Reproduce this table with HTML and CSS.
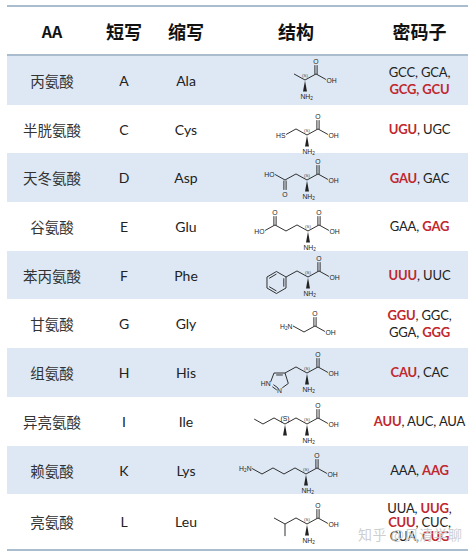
FILE: index.html
```html
<!DOCTYPE html>
<html lang="zh">
<head>
<meta charset="utf-8">
<title>氨基酸</title>
<link rel="stylesheet" href="styles.css">
</head>
<body>
<svg class="defs" width="0" height="0" aria-hidden="true">
  <defs>
    <g id="acid">
      <path d="M0 0L10 -5.5L19 -0.5M9 -5L9 -13.5M11 -5L11 -13.5" fill="none" stroke="#222" stroke-width="0.85"/>
      <text x="10" y="-14.5" text-anchor="middle" fill="#222" font-size="6.2" font-family="Liberation Sans, sans-serif">O</text>
      <text x="19.5" y="2.5" fill="#222" font-size="6.2" font-family="Liberation Sans, sans-serif">OH</text>
    </g>
    <g id="amine">
      <polygon points="0,0.5 -1.8,10.5 1.8,10.5" fill="#222"/>
      <text x="1.5" y="17.5" text-anchor="middle" fill="#222" font-size="6.2" font-family="Liberation Sans, sans-serif">NH<tspan font-size="4.3" dy="1">2</tspan></text>
      <text x="0" y="-3" text-anchor="middle" fill="#444" font-size="4" font-family="Liberation Sans, sans-serif">(S)</text>
    </g>
  </defs>
</svg>

<div class="table">
  <div class="row head">
    <div class="c lat">AA</div><div class="c">短写</div><div class="c">缩写</div><div class="c">结构</div><div class="c">密码子</div>
  </div>

  <div class="row alt">
    <div class="c cn">丙氨酸</div><div class="c ab">A</div><div class="c ab">Ala</div>
    <div class="c st"><svg class="mol" viewBox="0 0 150 49"><g transform="translate(84 24) scale(1.1)"><use href="#acid"/><use href="#amine"/><path d="M0 0L-10 -5.5"/></g></svg></div>
    <div class="c codon">GCC, GCA,<br><b>GCG, GCU</b></div>
  </div>

  <div class="row">
    <div class="c cn">半胱氨酸</div><div class="c ab">C</div><div class="c ab">Cys</div>
    <div class="c st"><svg class="mol" viewBox="0 0 150 49"><g transform="translate(86 30) scale(1.1)"><use href="#acid"/><use href="#amine"/><path d="M0 0L-10 -5.5L-19 -0.5"/><text x="-19.5" y="2.3" text-anchor="end">HS</text></g></svg></div>
    <div class="c codon"><b>UGU</b>, UGC</div>
  </div>

  <div class="row alt">
    <div class="c cn">天冬氨酸</div><div class="c ab">D</div><div class="c ab">Asp</div>
    <div class="c st"><svg class="mol" viewBox="0 0 150 49"><g transform="translate(86 27) scale(1.1)"><use href="#acid"/><use href="#amine"/><path d="M0 0L-10 -5.5L-20 0L-29 -5M-21 0.5L-21 9M-19 0.5L-19 9"/><text x="-20" y="15.5" text-anchor="middle">O</text><text x="-29.5" y="-2.5" text-anchor="end">HO</text></g></svg></div>
    <div class="c codon"><b>GAU</b>, GAC</div>
  </div>

  <div class="row">
    <div class="c cn">谷氨酸</div><div class="c ab">E</div><div class="c ab">Glu</div>
    <div class="c st"><svg class="mol" viewBox="0 0 150 49"><g transform="translate(87 29) scale(1.1)"><use href="#acid"/><use href="#amine"/><path d="M0 0L-10 -5.5L-20 0L-30 -5.5L-39 -0.5M-31 -5L-31 -13.5M-29 -5L-29 -13.5"/><text x="-30" y="-14.5" text-anchor="middle">O</text><text x="-39.5" y="2.5" text-anchor="end">HO</text></g></svg></div>
    <div class="c codon">GAA, <b>GAG</b></div>
  </div>

  <div class="row alt">
    <div class="c cn">苯丙氨酸</div><div class="c ab">F</div><div class="c ab">Phe</div>
    <div class="c st"><svg class="mol" viewBox="0 0 150 49"><g transform="translate(87 26) scale(1.1)"><use href="#acid"/><use href="#amine"/><path d="M0 0L-10 -5.5L-20 0"/><path d="M-20 0L-20 10L-28.7 15L-37.3 10L-37.3 0L-28.7 -5Z"/><path d="M-22 1.2L-22 8.8M-28.7 12.7L-35.3 8.8M-35.3 1.2L-28.7 -2.7"/></g></svg></div>
    <div class="c codon"><b>UUU</b>, UUC</div>
  </div>

  <div class="row">
    <div class="c cn">甘氨酸</div><div class="c ab">G</div><div class="c ab">Gly</div>
    <div class="c st"><svg class="mol" viewBox="0 0 150 49"><g transform="translate(83 33) scale(1.1)"><use href="#acid"/><path d="M0 0L-10 -5.5"/><text x="-10.5" y="-3" text-anchor="end">H<tspan font-size="4.3" dy="1">2</tspan><tspan dy="-1">N</tspan></text></g></svg></div>
    <div class="c codon"><b>GGU</b>, GGC,<br>GGA, <b>GGG</b></div>
  </div>

  <div class="row alt">
    <div class="c cn">组氨酸</div><div class="c ab">H</div><div class="c ab">His</div>
    <div class="c st"><svg class="mol" viewBox="0 0 150 49"><g transform="translate(86 25) scale(1.1)"><use href="#acid"/><use href="#amine"/><path d="M0 0L-10 -5.5L-20 0"/><path d="M-20 0L-30 0L-33 8M-20 0L-17 9.5L-22.5 13.5M-27.5 15.4L-31.5 12.5M-22 1.8L-28 1.8M-26.5 13.5L-30.5 10.6"/><text x="-33" y="11.5" text-anchor="end">HN</text><text x="-25" y="18" text-anchor="middle">N</text></g></svg></div>
    <div class="c codon"><b>CAU</b>, CAC</div>
  </div>

  <div class="row">
    <div class="c cn">异亮氨酸</div><div class="c ab">I</div><div class="c ab">Ile</div>
    <div class="c st"><svg class="mol" viewBox="0 0 150 49"><g transform="translate(86 27) scale(1.1)"><use href="#acid"/><use href="#amine"/><path d="M0 0L-10 -5.5L-20 0L-30 -5.5L-40 0L-48 -4.5"/><polygon points="-20,0.5 -21.8,10.5 -18.2,10.5" fill="#222" stroke="none"/><text x="-20" y="-3" text-anchor="middle" font-size="4" fill="#444">(S)</text></g></svg></div>
    <div class="c codon"><b>AUU</b>, AUC, AUA</div>
  </div>

  <div class="row alt">
    <div class="c cn">赖氨酸</div><div class="c ab">K</div><div class="c ab">Lys</div>
    <div class="c st"><svg class="mol" viewBox="0 0 150 49"><g transform="translate(85 28) scale(1.1)"><use href="#acid"/><use href="#amine"/><path d="M0 0L-10 -5.5L-20 0L-30 -5.5L-40 0L-49 -5"/><text x="-49.5" y="-2.5" text-anchor="end">H<tspan font-size="4.3" dy="1">2</tspan><tspan dy="-1">N</tspan></text></g></svg></div>
    <div class="c codon">AAA, <b>AAG</b></div>
  </div>

  <div class="row last">
    <div class="c cn">亮氨酸</div><div class="c ab">L</div><div class="c ab">Leu</div>
    <div class="c st"><svg class="mol" viewBox="0 0 150 55"><g transform="translate(86 30) scale(1.1)"><use href="#acid"/><use href="#amine"/><path d="M0 0L-10 -5.5L-20 0L-30 -5.5M-20 0L-20 11"/></g></svg></div>
    <div class="c codon tri">UUA, <b>UUG</b>,<br><b>CUU</b>, CUC,<br>CUA, <b>CUG</b></div>
  </div>
</div>

<div class="wm">知乎 @风清学聊</div>
</body>
</html>
```

FILE: styles.css
```css
html, body {
  margin: 0;
  padding: 0;
  background: #ffffff;
}

.defs {
  position: absolute;
  width: 0;
  height: 0;
  overflow: hidden;
}

.table {
  margin: 5px 0 0 7px;
  width: 461px;
  border-top: 2px solid #a9bdce;
  border-bottom: 2px solid #a9bdce;
}

.row {
  display: grid;
  grid-template-columns: 90px 54px 70px 150px 97px;
  height: 48.7px;
  align-items: center;
}

.row.head {
  height: 47px;
  border-bottom: 2px solid #a9bdce;
  font-family: "Noto Sans CJK SC", "Noto Sans", sans-serif;
  font-weight: 700;
  font-size: 18px;
  color: #111;
}

.row.head .lat {
  font-size: 16px;
}

.row.alt {
  background: #dde8f4;
}

.row.last {
  height: 55px;
}

.c {
  text-align: center;
}

.cn {
  font-family: "Noto Sans CJK SC", sans-serif;
  font-size: 14.5px;
  color: #333;
}

.ab {
  font-family: Lato, "Open Sans", sans-serif;
  font-size: 14px;
  color: #222;
}

.st {
  align-self: stretch;
}

.mol {
  display: block;
  width: 150px;
  height: 100%;
  overflow: visible;
}

.mol path {
  fill: none;
  stroke: #222;
  stroke-width: 0.85;
}

.mol text {
  font-family: "Liberation Sans", sans-serif;
  font-size: 6.2px;
  fill: #222;
}

.codon {
  font-family: Lato, "Open Sans", sans-serif;
  font-size: 13px;
  letter-spacing: -0.15px;
  line-height: 16.5px;
  color: #222;
}

.codon.tri {
  line-height: 14px;
}

.codon b {
  color: #c1272d;
  font-weight: 700;
}

.wm {
  position: absolute;
  left: 358px;
  top: 524px;
  font-family: "Noto Sans CJK SC", sans-serif;
  font-size: 14px;
  color: rgba(190, 190, 190, 0.75);
  text-shadow: 0 0 1px rgba(255, 255, 255, 0.9);
  letter-spacing: 0.5px;
}
```
